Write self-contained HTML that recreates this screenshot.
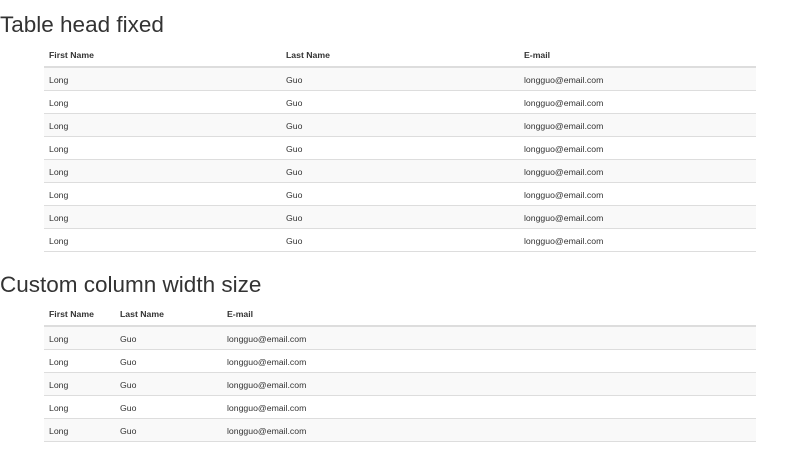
<!DOCTYPE html>
<html><head><style>
body{margin:0;width:800px;height:450px;overflow:hidden;background:#fff;font-family:"Liberation Sans",sans-serif;color:#333}
h2{position:absolute;left:0;margin:0;font-size:22.5px;font-weight:400;line-height:28px}
table{position:absolute;left:44px;width:712px;border-collapse:collapse;font-size:8.7px;table-layout:fixed}
th{text-align:left;font-weight:bold;height:21px;padding:0 5px 1px;border-bottom:2px solid #ddd;vertical-align:middle}
td{height:20px;padding:2px 5px 0;border-bottom:1px solid #ddd;vertical-align:middle}
tbody tr:nth-child(odd){background:#f9f9f9}
</style></head><body>
<h2 style="top:11px">Table head fixed</h2>
<table style="top:44px">
<colgroup><col style="width:237px"><col style="width:238px"><col></colgroup>
<thead><tr><th>First Name</th><th>Last Name</th><th>E-mail</th></tr></thead>
<tbody>
<tr><td>Long</td><td>Guo</td><td>longguo@email.com</td></tr>
<tr><td>Long</td><td>Guo</td><td>longguo@email.com</td></tr>
<tr><td>Long</td><td>Guo</td><td>longguo@email.com</td></tr>
<tr><td>Long</td><td>Guo</td><td>longguo@email.com</td></tr>
<tr><td>Long</td><td>Guo</td><td>longguo@email.com</td></tr>
<tr><td>Long</td><td>Guo</td><td>longguo@email.com</td></tr>
<tr><td>Long</td><td>Guo</td><td>longguo@email.com</td></tr>
<tr><td>Long</td><td>Guo</td><td>longguo@email.com</td></tr>
</tbody></table>
<h2 style="top:271px">Custom column width size</h2>
<table style="top:303px">
<colgroup><col style="width:71px"><col style="width:107px"><col></colgroup>
<thead><tr><th>First Name</th><th>Last Name</th><th>E-mail</th></tr></thead>
<tbody>
<tr><td>Long</td><td>Guo</td><td>longguo@email.com</td></tr>
<tr><td>Long</td><td>Guo</td><td>longguo@email.com</td></tr>
<tr><td>Long</td><td>Guo</td><td>longguo@email.com</td></tr>
<tr><td>Long</td><td>Guo</td><td>longguo@email.com</td></tr>
<tr><td>Long</td><td>Guo</td><td>longguo@email.com</td></tr>
</tbody></table>
</body></html>
